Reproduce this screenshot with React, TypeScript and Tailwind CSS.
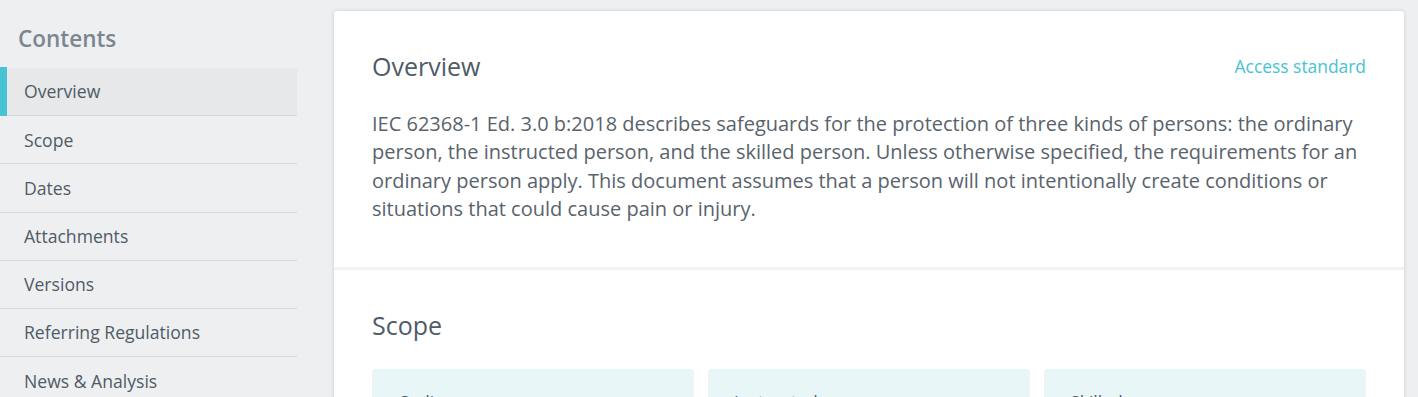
import React from "react";

const items = [
  "Overview",
  "Scope",
  "Dates",
  "Attachments",
  "Versions",
  "Referring Regulations",
  "News & Analysis",
];

export default function App() {
  return (
    <div
      className="flex min-h-[397px] w-full bg-[#eeeff1] overflow-hidden"
      style={{ fontFamily: '"Open Sans", "Noto Sans", sans-serif' }}
    >
      <aside className="w-[297px] shrink-0">
        <h2 className="pl-[18px] pt-[21px] h-[68px] text-[22.5px] leading-[36px] font-semibold text-[#7b868f]">
          Contents
        </h2>
        <nav className="flex flex-col">
          {items.map((it, i) => (
            <div
              key={it}
              className={
                i === 0
                  ? "relative h-[48.2px] flex items-center pl-[24px] border-b border-[#d6d9dc] bg-[#e6e8ea] text-[17.6px] text-[#4f5b66]"
                  : "relative h-[48.2px] flex items-center pl-[24px] border-b border-[#d6d9dc] text-[17.6px] text-[#4f5b66]"
              }
            >
              {i === 0 && (
                <span className="absolute left-0 top-[-1px] bottom-[-1px] w-[7px] bg-[#47c3d3]" />
              )}
              {it}
            </div>
          ))}
        </nav>
      </aside>
      <main className="ml-[37px] mr-[14px] mt-[11px] flex-1 bg-white rounded-t-[3px] shadow-[0_0_4px_rgba(0,0,0,0.14)]">
        <section className="px-[38px] pt-[37px] pb-[44px] border-b-[3px] border-[#f1f2f3]">
          <div className="flex items-start justify-between">
            <h1 className="text-[25px] leading-[36px] text-[#4f5b66]">Overview</h1>
            <a className="text-[17.4px] leading-[36px] text-[#47c3d3]">
              Access standard
            </a>
          </div>
          <p className="mt-[25px] pt-[1px] text-[20px] leading-[28.3px] text-[#59636c]">
            IEC 62368-1 Ed. 3.0 b:2018 describes safeguards for the protection of three kinds of persons: the ordinary
            person, the instructed person, and the skilled person. Unless otherwise specified, the requirements for an
            ordinary person apply. This document assumes that a person will not intentionally create conditions or
            situations that could cause pain or injury.
          </p>
        </section>
        <section className="px-[38px] pt-[37px]">
          <h1 className="text-[25px] leading-[36px] text-[#4f5b66]">Scope</h1>
          <div className="mt-[26px] grid grid-cols-3 gap-[14px]">
            {["Ordinary person", "Instructed person", "Skilled person"].map((t) => (
              <div key={t} className="h-[120px] rounded-[4px] bg-[#e8f6f8] px-[26px] pt-[20px] text-[17.6px] text-[#4f5b66]">
                {t}
              </div>
            ))}
          </div>
        </section>
      </main>
    </div>
  );
}
